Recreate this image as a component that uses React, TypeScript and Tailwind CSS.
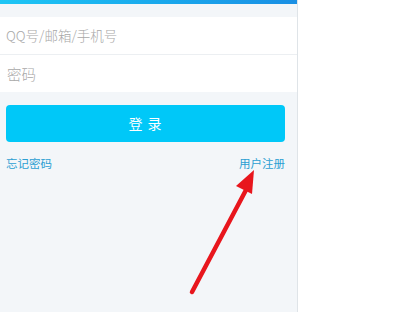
import React from "react";

export default function App() {
  return (
    <div
      className="relative flex h-[312px] w-[400px] overflow-hidden bg-white"
      style={{ fontFamily: '"Noto Sans CJK SC", "Noto Sans", sans-serif' }}
    >
      <div className="flex h-full w-[298px] flex-col border-r border-[#dfe4e8] bg-[#f3f6f9]">
        <div className="h-[4px] w-full bg-gradient-to-r from-[#1ec6f5] to-[#1a8fe4]" />
        <div className="mt-[13px] flex flex-col bg-white">
          <div className="flex h-[38px] items-center border-b border-[#eceff2] pl-[6px] text-[13.5px] font-light text-[#a8a8a8]">
            QQ号/邮箱/手机号
          </div>
          <div className="flex h-[37px] items-center pl-[7px] text-[14.5px] font-light text-[#a8a8a8]">
            密码
          </div>
        </div>
        <div className="mx-[6px] mt-[13px] flex h-[37px] w-[279px] items-center justify-center rounded-[4px] bg-[#00c8f8] text-[14px] tracking-[1px] text-white">
          登 录
        </div>
        <div className="mt-[13px] flex w-[291px] items-center justify-between px-[6px] text-[11.5px] text-[#2c9fd2]">
          <span>忘记密码</span>
          <span>用户注册</span>
        </div>
      </div>
      <svg
        className="pointer-events-none absolute left-0 top-0"
        width="400"
        height="312"
        viewBox="0 0 400 312"
      >
        <line
          x1="192"
          y1="292"
          x2="246"
          y2="190"
          stroke="#e8161d"
          strokeWidth="4.5"
          strokeLinecap="round"
        />
        <polygon points="254,170 236,186 252,194" fill="#e8161d" />
      </svg>
    </div>
  );
}
